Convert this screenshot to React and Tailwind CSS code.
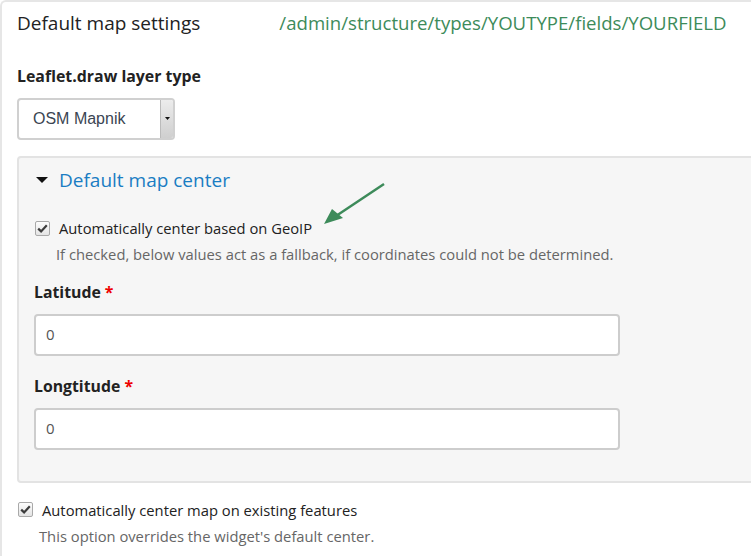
import React from "react";

function CheckBox() {
  return (
    <span className="flex h-[15px] w-[15px] shrink-0 items-center justify-center rounded-[2px] border border-[#a9a9a9] bg-gradient-to-b from-[#fdfdfd] to-[#e4e4e4]">
      <svg width="11" height="9" viewBox="0 0 11 9">
        <path d="M1.2 4.6 L4.1 7.4 L9.8 1.3" fill="none" stroke="#3c3c3c" strokeWidth="2.2" />
      </svg>
    </span>
  );
}

function TextField({ label, value }) {
  return (
    <div>
      <div className="text-[15.8px] font-bold leading-[20px] text-[#222]">
        {label} <span className="text-[#e00]">*</span>
      </div>
      <div className="mt-[12px] flex h-[42px] w-[586px] items-center rounded-[4px] border-2 border-[#cdcdcd] bg-white px-[10px] text-[15px] text-[#555]">
        {value}
      </div>
    </div>
  );
}

export default function App() {
  return (
    <div className="h-[556px] w-[751px] overflow-hidden bg-white font-['Open_Sans',sans-serif]">
      <div className="h-[600px] w-[800px] rounded-tl-[6px] border-l-2 border-t-2 border-[#e6e6e6] pl-[15px] pt-[7px]">
        {/* HEADER */}
        <div className="flex items-baseline">
          <h2 className="text-[19px] leading-[26px] text-[#222]">
            Default map settings
          </h2>
          <span className="ml-[79px] text-[18.6px] text-[#3d8b5a]">
            /admin/structure/types/YOUTYPE/fields/YOURFIELD
          </span>
        </div>

        {/* LAYER TYPE */}
        <div className="mt-[29px] text-[15.9px] font-bold leading-[20px] text-[#222]">
          Leaflet.draw layer type
        </div>
        <div className="mt-[12px] flex h-[42px] w-[158px] overflow-hidden rounded-[4px] border-2 border-[#d0d0d0] bg-white font-['Liberation_Sans',sans-serif]">
          <div className="flex flex-1 items-center pl-[14px] text-[16px] text-[#3b4552]">
            OSM Mapnik
          </div>
          <div className="flex w-[13px] items-center justify-center border-l border-[#bbb] bg-gradient-to-b from-[#ececec] to-[#cfcfcf]">
            <svg width="5" height="3" viewBox="0 0 5 3">
              <path d="M0 0 H5 L2.5 3 Z" fill="#111" />
            </svg>
          </div>
        </div>

        {/* DEFAULT MAP CENTER */}
        <div className="relative mt-[16px] rounded-[4px] border-2 border-[#e3e3e3] bg-[#f6f6f6] pb-[31px] pl-[15px] pt-[8px]">
          <div className="flex items-center">
            <svg width="12" height="6" viewBox="0 0 12 6" className="ml-[2px]">
              <path d="M0 0 H12 L6 6 Z" fill="#111" />
            </svg>
            <span className="ml-[11px] text-[19px] text-[#1a7dc3]">
              Default map center
            </span>
          </div>

          <div className="mt-[23px] flex items-center pl-[1px]">
            <CheckBox />
            <span className="ml-[9px] text-[14.75px] text-[#222]">
              Automatically center based on GeoIP
            </span>
          </div>
          <div className="mt-[3px] pl-[22px] text-[14.75px] text-[#666]">
            If checked, below values act as a fallback, if coordinates could not be determined.
          </div>

          <svg
            className="absolute left-[303px] top-[24px]"
            width="64"
            height="44"
            viewBox="0 0 64 44"
          >
            <path d="M62 2 L14 34" stroke="#3d8b5a" strokeWidth="2.5" fill="none" />
            <path d="M2 42 L10 27 L21 36 Z" fill="#3d8b5a" />
          </svg>

          <div className="mt-[17px] flex flex-col gap-[20px]">
            <TextField label="Latitude" value="0" />
            <TextField label="Longtitude" value="0" />
          </div>
        </div>

        {/* EXISTING FEATURES */}
        <div className="mt-[16px] flex items-center pl-[1px]">
          <CheckBox />
          <span className="ml-[9px] text-[14.75px] text-[#222]">
            Automatically center map on existing features
          </span>
        </div>
        <div className="mt-[4px] pl-[22px] text-[14.75px] text-[#666]">
          This option overrides the widget's default center.
        </div>
      </div>
    </div>
  );
}
